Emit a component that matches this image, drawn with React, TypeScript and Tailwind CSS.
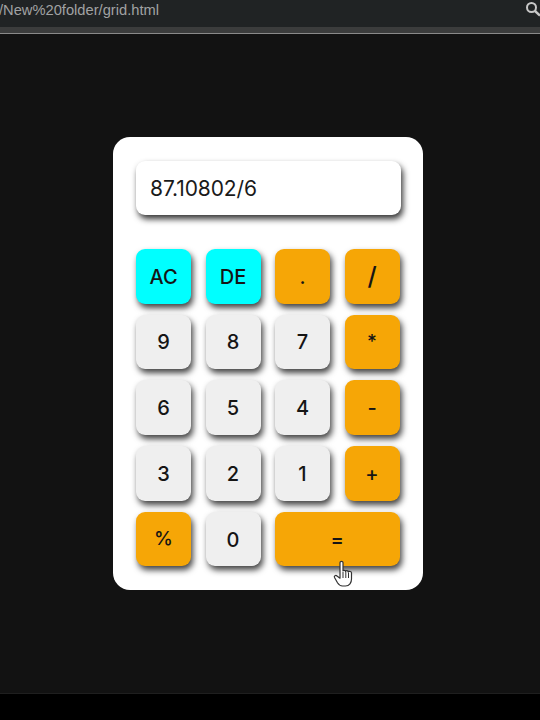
const cyan = "bg-[#0ff]";
const orange = "bg-[#f6a606]";
const gray = "bg-[#efefef]";

const keys: { label: string; color: string; wide?: boolean; size: string }[] = [
  { label: "AC", color: cyan, size: "text-[20px]" },
  { label: "DE", color: cyan, size: "text-[20px]" },
  { label: ".", color: orange, size: "text-[20px]" },
  { label: "/", color: orange, size: "text-[25px]" },
  { label: "9", color: gray, size: "text-[20px]" },
  { label: "8", color: gray, size: "text-[20px]" },
  { label: "7", color: gray, size: "text-[20px]" },
  { label: "*", color: orange, size: "text-[19px]" },
  { label: "6", color: gray, size: "text-[20px]" },
  { label: "5", color: gray, size: "text-[20px]" },
  { label: "4", color: gray, size: "text-[20px]" },
  { label: "-", color: orange, size: "text-[20px]" },
  { label: "3", color: gray, size: "text-[20px]" },
  { label: "2", color: gray, size: "text-[20px]" },
  { label: "1", color: gray, size: "text-[20px]" },
  { label: "+", color: orange, size: "text-[20px]" },
  { label: "%", color: orange, size: "text-[19px]" },
  { label: "0", color: gray, size: "text-[20px]" },
  { label: "=", color: orange, wide: true, size: "text-[20px]" },
];

function Hand() {
  return (
    <svg className="absolute left-[333px] top-[560px]" width="24" height="28" viewBox="0 0 24 28">
      <path
        d="M7 2.500c0-1.600 3-1.600 3 0V11c0-1 2.600-1 2.600.4 0-1 2.600-1 2.600.5 0-1 3.300-.8 3.300.8V19c0 3.500-2 7-6 7h-3c-2.500 0-3.800-1.200-5-3.200L1.500 17.500c-.8-1.600 1.300-2.800 2.500-1.500L7 18.200Z"
        fill="#fff"
        stroke="#333"
        strokeWidth="1.200"
        strokeLinejoin="round"
      />
      <path d="M10 12v6M12.800 12v6M15.500 12.500V18" stroke="#333" strokeWidth="1" />
    </svg>
  );
}

export default function App() {
  return (
    <div className="relative flex h-[720px] w-[540px] flex-col overflow-hidden bg-black font-['Inter','Liberation_Sans',sans-serif]">
      <div className="flex h-[27px] items-start justify-between bg-[#202324]">
        <span className="ml-[-1px] text-[14.700px] leading-[20px] text-[#a0a2a3] font-['Liberation_Sans',sans-serif]">
          /New%20folder/grid.html
        </span>
        <svg width="16" height="16" viewBox="0 0 16 16" className="mt-[1px] translate-x-[1px]">
          <circle cx="6.500" cy="6.500" r="4.500" fill="none" stroke="#c8c8c8" strokeWidth="2" />
          <path d="M10 10l5 4.500" stroke="#c8c8c8" strokeWidth="2.400" />
        </svg>
      </div>
      <div className="h-[6px] bg-[#3b3c3c]" />
      <div className="h-[1px] bg-[#8a8a8a]" />
      <div className="flex h-[659px] items-start justify-center bg-[#121212] pt-[103px] pr-[4px]">
        <div className="flex h-[453px] w-[310px] flex-col rounded-[17px] bg-white px-[23px] pt-[24px]">
          <div className="flex h-[54px] w-[265px] items-center rounded-[9px] bg-white pl-[14px] pt-[1px] text-[21px] tracking-[-0.1px] text-[#1a1a1a] shadow-[2px_4px_6px_rgba(0,0,0,0.8)]">
            87.10802/6
          </div>
          <div className="mt-[34px] grid grid-cols-[55px_55px_55px_55px] auto-rows-[54.500px] gap-x-[14.500px] gap-y-[11.200px]">
            {keys.map((k) => (
              <div
                key={k.label}
                className={`flex items-center justify-center rounded-[9px] pt-[1px] font-medium text-[#151515] shadow-[2px_4px_6px_rgba(0,0,0,0.75)] ${k.color} ${k.wide ? "col-span-2" : ""} ${k.size}`}
              >
                {k.label}
              </div>
            ))}
          </div>
        </div>
      </div>
      <div className="h-[1px] bg-[#1f1f1f]" />
      <div className="flex-1 bg-black" />
      <Hand />
    </div>
  );
}
